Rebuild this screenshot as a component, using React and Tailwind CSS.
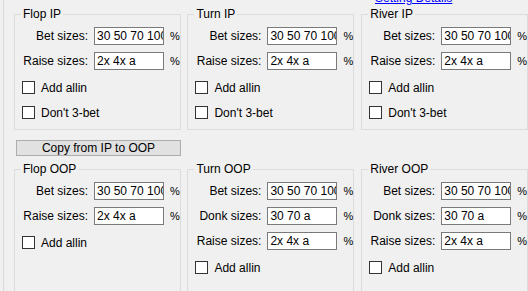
import React from "react";

const font = { fontFamily: '"Liberation Sans", Arial, sans-serif' };

function Group({ title, className, children }) {
  return (
    <div className={"relative border border-[#dcdcdc] pt-[12px] " + className}>
      <span className="absolute -top-[8px] left-[6px] px-[2px] bg-[#f0f0f0] text-[12px] leading-[14px] text-black">
        {title}
      </span>
      {children}
    </div>
  );
}

function Row({ label, value, first }) {
  return (
    <div className={"flex items-center h-[18px] " + (first ? "" : "mt-[7px]")}>
      <span className="w-[79px] pr-[6px] text-right text-[12px] leading-[14px] text-black whitespace-nowrap">
        {label}
      </span>
      <div className="w-[70px] h-[18px] border border-[#7a7a7a] bg-white overflow-hidden flex items-center pl-[2px]">
        <span className="text-[12px] leading-[14px] text-black whitespace-nowrap">{value}</span>
      </div>
      <span className="ml-[6px] text-[11px] leading-[14px] text-black">%</span>
    </div>
  );
}

function Check({ label, mt }) {
  return (
    <div className={"flex items-center h-[13px] pl-[7px] " + mt}>
      <div className="w-[13px] h-[13px] border border-[#333333] bg-white" />
      <span className="ml-[6px] text-[12px] leading-[14px] text-black whitespace-nowrap">{label}</span>
    </div>
  );
}

export default function App() {
  return (
    <div className="w-[528px] h-[291px] overflow-hidden bg-[#f0f0f0]" style={font}>
      <div className="ml-[3px] h-[291px] border-l border-[#dadada] flex flex-col">
        <div className="-mt-[10px] h-[14px] pl-[371px] leading-[14px]">
          <span className="text-[12px] leading-[14px] text-[#0000ff] underline whitespace-nowrap">Setting Details</span>
        </div>
        <div className="flex mt-[10px] h-[116px]">
          <Group title="Flop IP" className="ml-[10px] w-[168px] h-[116px]">
            <Row first label="Bet sizes:" value="30 50 70 100" />
            <Row label="Raise sizes:" value="2x 4x a" />
            <Check label="Add allin" mt="mt-[11px]" />
            <Check label="Don't 3-bet" mt="mt-[12px]" />
          </Group>
          <Group title="Turn IP" className="ml-[6px] w-[167px] h-[116px]">
            <Row first label="Bet sizes:" value="30 50 70 100" />
            <Row label="Raise sizes:" value="2x 4x a" />
            <Check label="Add allin" mt="mt-[11px]" />
            <Check label="Don't 3-bet" mt="mt-[12px]" />
          </Group>
          <Group title="River IP" className="ml-[7px] w-[167px] h-[116px]">
            <Row first label="Bet sizes:" value="30 50 70 100" />
            <Row label="Raise sizes:" value="2x 4x a" />
            <Check label="Add allin" mt="mt-[11px]" />
            <Check label="Don't 3-bet" mt="mt-[12px]" />
          </Group>
        </div>
        <div className="mt-[10px] ml-[12px] w-[165px] h-[20px] border border-[#adadad] bg-[#e1e1e1] flex items-center justify-center">
          <span className="text-[12px] leading-[14px] text-black">Copy from IP to OOP</span>
        </div>
        <div className="flex mt-[13px] flex-1">
          <Group title="Flop OOP" className="ml-[10px] w-[168px] h-[130px]">
            <Row first label="Bet sizes:" value="30 50 70 100" />
            <Row label="Raise sizes:" value="2x 4x a" />
            <Check label="Add allin" mt="mt-[11px]" />
          </Group>
          <Group title="Turn OOP" className="ml-[6px] w-[167px] h-[130px]">
            <Row first label="Bet sizes:" value="30 50 70 100" />
            <Row label="Donk sizes:" value="30 70 a" />
            <Row label="Raise sizes:" value="2x 4x a" />
            <Check label="Add allin" mt="mt-[11px]" />
          </Group>
          <Group title="River OOP" className="ml-[7px] w-[167px] h-[130px]">
            <Row first label="Bet sizes:" value="30 50 70 100" />
            <Row label="Donk sizes:" value="30 70 a" />
            <Row label="Raise sizes:" value="2x 4x a" />
            <Check label="Add allin" mt="mt-[11px]" />
          </Group>
        </div>
      </div>
    </div>
  );
}
